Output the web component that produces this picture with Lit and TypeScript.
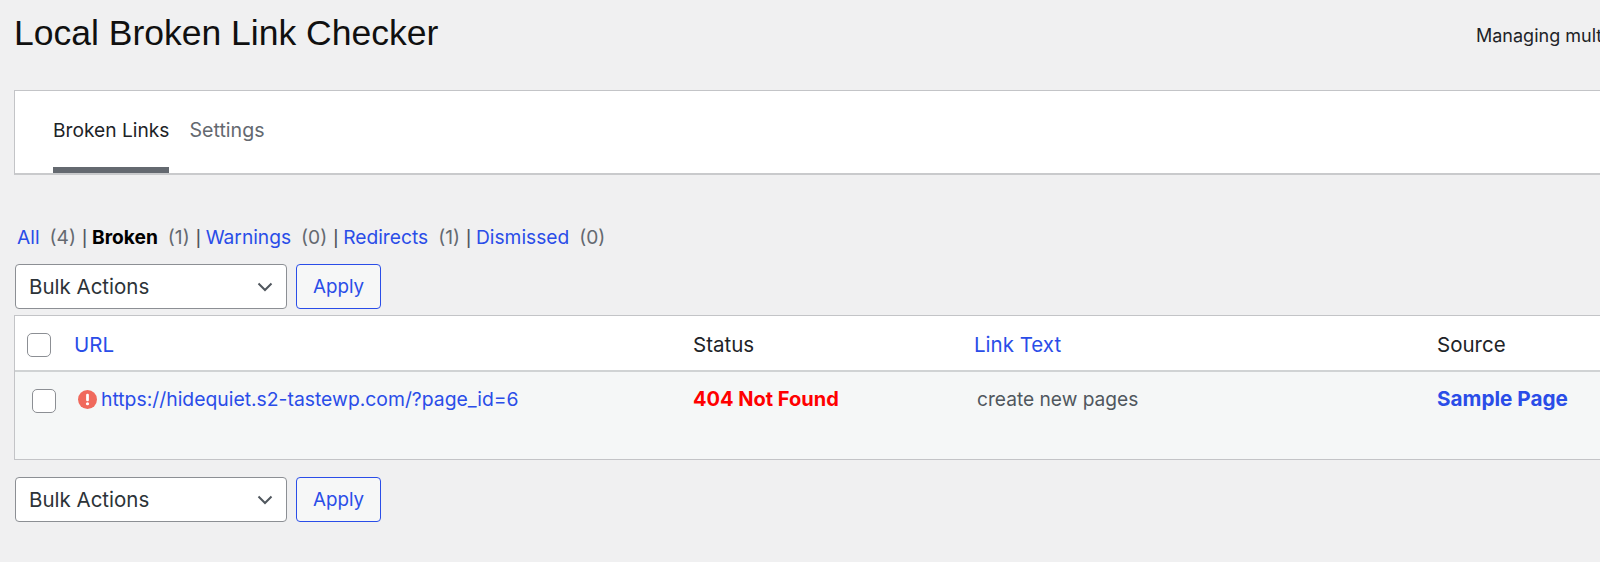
import { LitElement, html, css } from "lit";
import { customElement } from "lit/decorators.js";

const chevron = html`<svg class="chev" viewBox="0 0 16 10" width="16" height="10" aria-hidden="true"><path d="M1.5 1.5 8 8l6.5-6.5" fill="none" stroke="#50575e" stroke-width="2"/></svg>`;

@customElement("app-root")
export class AppRoot extends LitElement {
  static styles = css`
    :host { display: block; width: 1600px; height: 562px; overflow: hidden; background: #f0f0f1; font-family: Inter, "Liberation Sans", sans-serif; font-size: 19px; color: #2c3338; box-sizing: border-box; }
    * { box-sizing: border-box; }
    a { color: #2a4de8; text-decoration: none; }
    .page { width: 1700px; padding-left: 14px; }
    .head { display: flex; justify-content: space-between; height: 90px; padding-top: 12px; width: 1686px; }
    h1 { margin: 0; font: 400 35.5px/42px "Liberation Sans", sans-serif; color: #101010; }
    .manage { font-size: 18px; line-height: 22px; padding: 13px 0 0; width: 224px; color: #1d2327; white-space: nowrap; }
    .tabs { display: flex; gap: 20px; height: 85px; padding: 0 0 0 38px; background: #fff; border: 1px solid #c3c4c7; border-bottom: 2px solid #c9cacc; }
    .tab { height: 82px; padding-top: 26px; font-size: 19.6px; line-height: 26px; color: #646970; }
    .tab.on { font-size: 19.2px; color: #1d2327; border-bottom: 6px solid #646970; }
    .filters { display: flex; align-items: center; height: 24px; margin: 50px 0 15px 3px; font-size: 19.2px; white-space: nowrap; color: #646970; }
    .filters b { color: #000; font-weight: 700; }
    .filters .n { margin-left: 10px; }
    .filters .sep { margin: 0 4.8px 0 6px; font-size: 20px; color: #50575e; font-family: "Liberation Sans", sans-serif; }
    .bar { display: flex; gap: 9px; margin-left: 1px; height: 45px; }
    .select { display: flex; align-items: center; justify-content: space-between; width: 272px; padding: 0 13px 0 13px; background: #fff; border: 1px solid #8c8f94; border-radius: 4px; font-size: 20.5px; color: #2c3338; }
    .apply { width: 85px; background: #f6f7f7; border: 1px solid #2a4de8; border-radius: 4px; color: #2a4de8; font: inherit; font-size: 18.8px; padding: 0; }
    .table { margin-top: 6px; background: #fff; border: 1px solid #c3c4c7; }
    .grid { display: grid; grid-template-columns: 678px 281px 463px 1fr; }
    .thead { height: 56px; padding-top: 4px; align-items: center; border-bottom: 2px solid #d0d3d4; line-height: 24px; font-size: 20.5px; color: #1d2327; }
    .row { height: 87px; background: #f5f7f7; align-items: start; padding-top: 15px; line-height: 24px; font-size: 20px; }
    .first { display: flex; align-items: center; }
    .box { flex: none; width: 24px; height: 24px; background: #fff; border: 1.5px solid #8c8f94; border-radius: 5px; }
    .thead .first { padding-left: 12px; gap: 23px; }
    .row .first { padding-left: 17px; align-items: flex-start; }
    .row .box { margin-top: 2px; }
    .icon { flex: none; margin: 3px 4px 0 22px; }
    .url { font-size: 19.35px; white-space: nowrap; }
    .status { color: #ff0000; font-weight: 700; }
    .text { color: #50575e; font-size: 19.15px; padding-left: 3px; }
    .source { font-weight: 700; font-size: 20.7px; }
    .bottom { margin-top: 17px; }
  `;

  private bar(cls = "") {
    return html`<div class="bar ${cls}">
      <div class="select"><span>Bulk Actions</span>${chevron}</div>
      <button class="apply">Apply</button>
    </div>`;
  }

  render() {
    return html`<div class="page">
      <header class="head">
        <h1>Local Broken Link Checker</h1>
        <div class="manage">Managing multiple sites?</div>
      </header>
      <nav class="tabs">
        <div class="tab on">Broken Links</div>
        <div class="tab">Settings</div>
      </nav>
      <div class="filters">
        <a href="#">All</a><span class="n">(4)</span><span class="sep">|</span>
        <b>Broken</b><span class="n">(1)</span><span class="sep">|</span>
        <a href="#">Warnings</a><span class="n">(0)</span><span class="sep">|</span>
        <a href="#">Redirects</a><span class="n">(1)</span><span class="sep">|</span>
        <a href="#">Dismissed</a><span class="n">(0)</span>
      </div>
      ${this.bar()}
      <div class="table">
        <div class="grid thead">
          <div class="first"><span class="box"></span><a href="#">URL</a></div>
          <div>Status</div>
          <div><a href="#">Link Text</a></div>
          <div>Source</div>
        </div>
        <div class="grid row">
          <div class="first">
            <span class="box"></span>
            <svg class="icon" width="19" height="19" viewBox="0 0 18 18" aria-hidden="true"><circle cx="9" cy="9" r="9" fill="#f0695c"/><rect x="7.7" y="3.6" width="2.6" height="7" rx="1.2" fill="#fff"/><circle cx="9" cy="13" r="1.5" fill="#fff"/></svg>
            <a class="url" href="#">https://hidequiet.s2-tastewp.com/?page_id=6</a>
          </div>
          <div class="status">404 Not Found</div>
          <div class="text">create new pages</div>
          <div><a class="source" href="#">Sample Page</a></div>
        </div>
      </div>
      ${this.bar("bottom")}
    </div>`;
  }
}
